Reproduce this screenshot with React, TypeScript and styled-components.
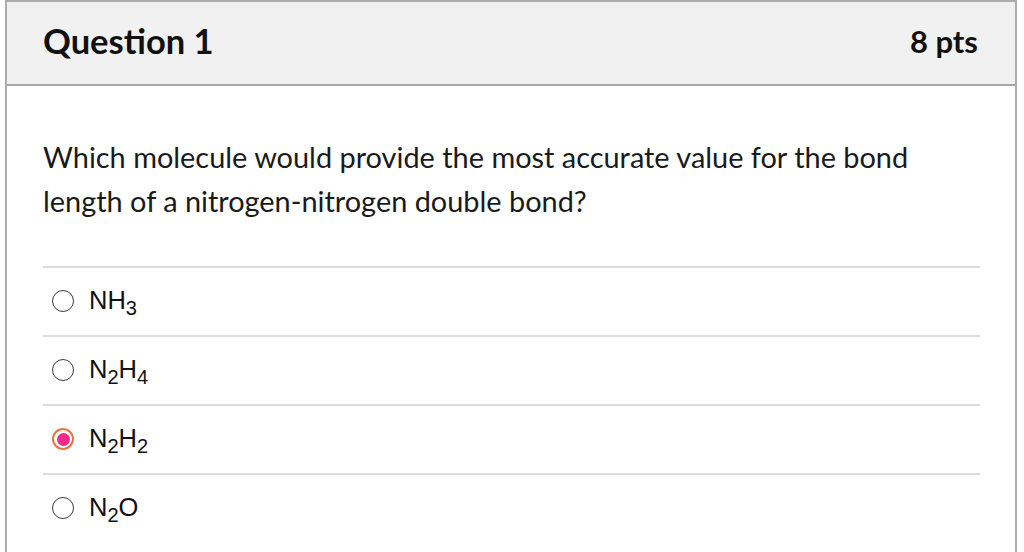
import styled, { createGlobalStyle } from 'styled-components';

const GlobalStyle = createGlobalStyle`
    html, body {
        margin: 0;
        padding: 0;
        background: #ffffff;
    }
    body {
        width: 1024px;
        height: 552px;
        overflow: hidden;
    }
`;

const Page = styled.div`
    padding-left: 5px;
    width: 1024px;
    height: 552px;
    box-sizing: border-box;
`;

const Card = styled.div`
    width: 1012px;
    height: 560px;
    box-sizing: border-box;
    border: 2px solid #acacac;
    border-bottom: none;
    background: #ffffff;
`;

const Header = styled.div`
    display: flex;
    align-items: center;
    justify-content: space-between;
    height: 84px;
    box-sizing: border-box;
    padding: 0 37px 5px 36px;
    background: #f1f1f1;
    border-bottom: 2px solid #a8a8a8;
    font-family: Lato, "Liberation Sans", sans-serif;
    font-weight: 700;
    color: #111;
`;

const Title = styled.h2`
    margin: 0;
    font-size: 34.5px;
    font-weight: 700;
`;

const Points = styled.span`
    font-size: 31px;
`;

const Body = styled.div`
    padding: 49px 35px 0 36px;
`;

const Prompt = styled.p`
    margin: 0 0 43px;
    font-family: Lato, "Liberation Sans", sans-serif;
    font-size: 28.9px;
    line-height: 44px;
    color: #1a1a1a;
`;

const Answers = styled.div`
    display: flex;
    flex-direction: column;
`;

const Answer = styled.label`
    display: flex;
    align-items: center;
    height: 69px;
    box-sizing: border-box;
    border-top: 2px solid #dcdcdc;
    padding: 0 0 3px 9px;
    font-family: "Liberation Sans", Arial, sans-serif;
    font-size: 25.5px;
    color: #111;
`;

const Radio = styled.span<{ $checked?: boolean }>`
    width: 22px;
    height: 22px;
    box-sizing: border-box;
    border-radius: 50%;
    border: ${(p) => (p.$checked ? '2px solid #e8743f' : '1.5px solid #3a3a3a')};
    display: flex;
    align-items: center;
    justify-content: center;
    margin: 2px 15px 0 0;
    flex-shrink: 0;

    &::after {
        content: '';
        display: ${(p) => (p.$checked ? 'block' : 'none')};
        width: 13px;
        height: 13px;
        border-radius: 50%;
        background: #f72a8c;
    }
`;

const Sub = styled.sub`
    font-size: 20px;
    vertical-align: -6px;
    line-height: 0;
`;

type Choice = { parts: [string, boolean][]; checked?: boolean };

const choices: Choice[] = [
    { parts: [['NH', false], ['3', true]] },
    { parts: [['N', false], ['2', true], ['H', false], ['4', true]] },
    { parts: [['N', false], ['2', true], ['H', false], ['2', true]], checked: true },
    { parts: [['N', false], ['2', true], ['O', false]] },
];

export default function App() {
    return (
        <>
            <GlobalStyle />
            <Page>
                <Card>
                    <Header>
                        <Title>Question 1</Title>
                        <Points>8 pts</Points>
                    </Header>
                    <Body>
                        <Prompt>
                            Which molecule would provide the most accurate value for the bond length of a nitrogen-nitrogen double bond?
                        </Prompt>
                        <Answers>
                            {choices.map((choice, key) => (
                                <Answer key={key}>
                                    <Radio $checked={choice.checked} />
                                    <span>
                                        {choice.parts.map(([text, sub], i) =>
                                            sub ? <Sub key={i}>{text}</Sub> : <span key={i}>{text}</span>
                                        )}
                                    </span>
                                </Answer>
                            ))}
                        </Answers>
                    </Body>
                </Card>
            </Page>
        </>
    );
}
